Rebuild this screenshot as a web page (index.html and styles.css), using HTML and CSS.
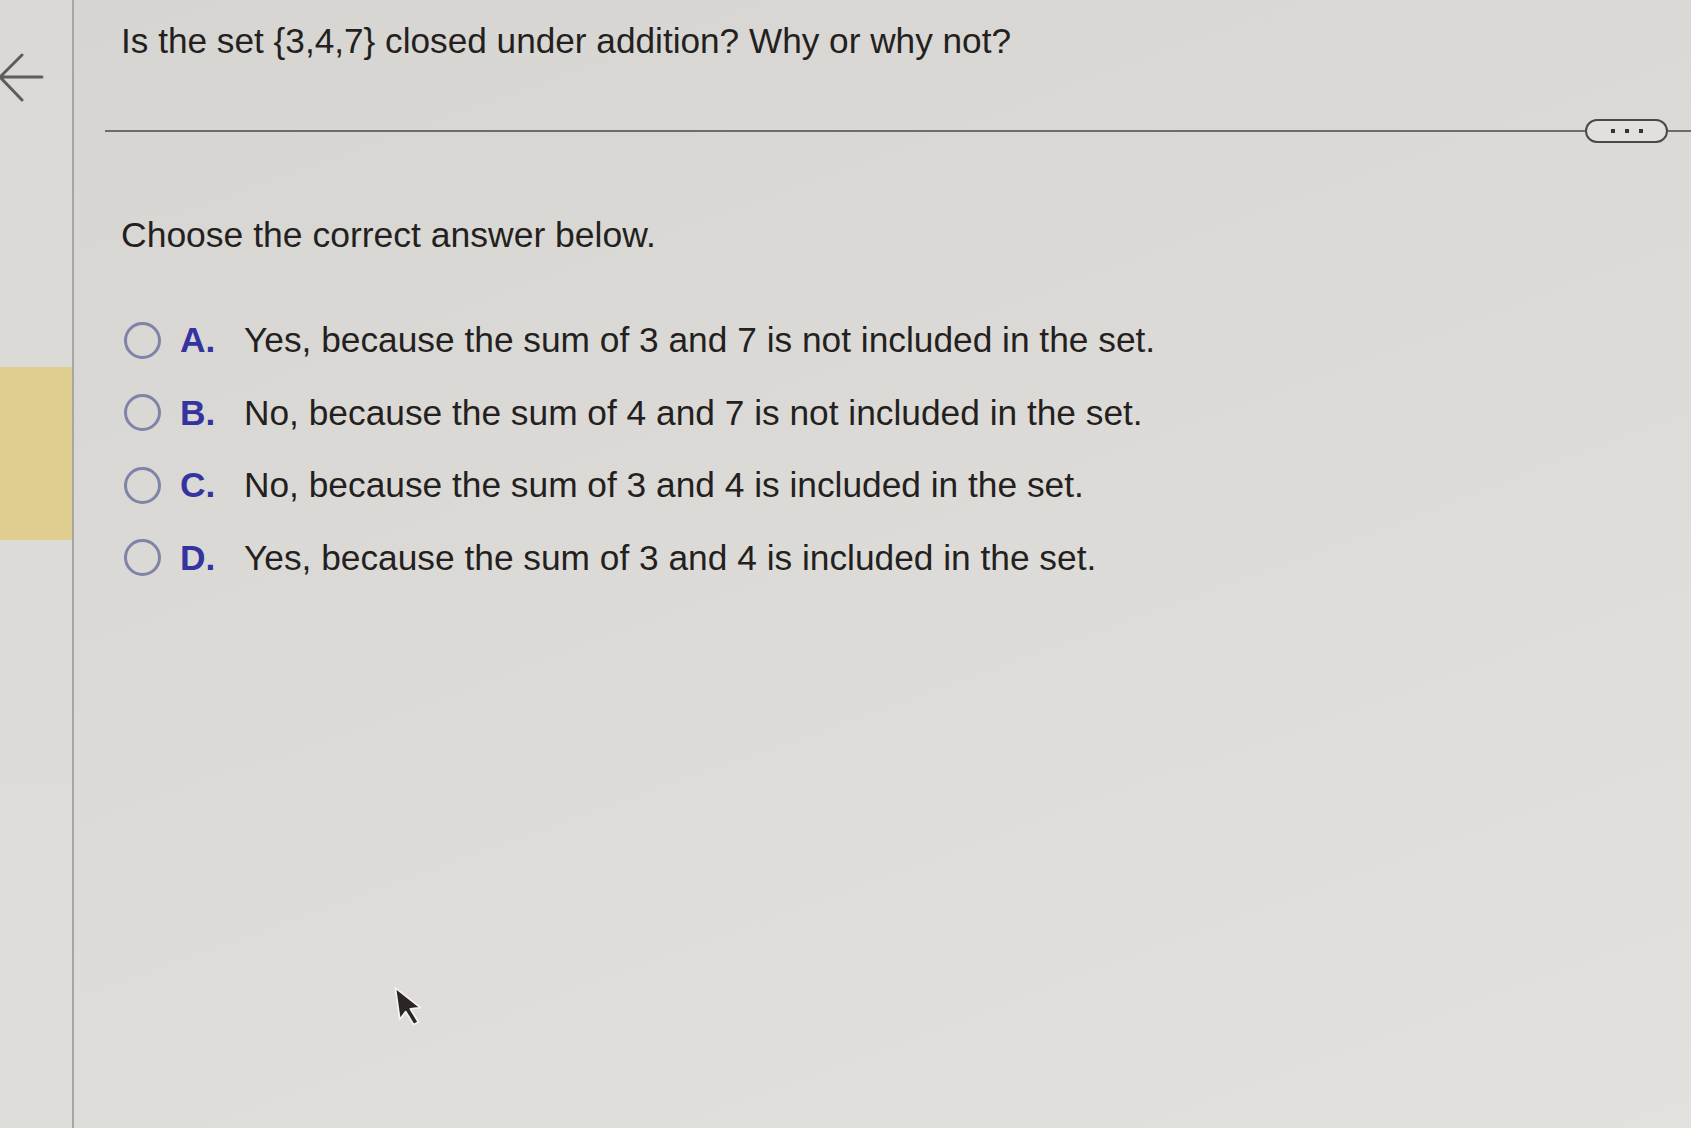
FILE: index.html
```html
<!DOCTYPE html>
<html lang="en">
<head>
<meta charset="utf-8">
<title>Question</title>
<link rel="stylesheet" href="styles.css">
</head>
<body>
<div class="screen">
  <aside class="sidebar">
    <button class="back" aria-label="Back">
      <svg width="46" height="54" viewBox="0 0 46 54"><path d="M44 26 H2 M24 4 L2 26 L24 49" fill="none" stroke="#5f5d5b" stroke-width="3" stroke-linecap="round" stroke-linejoin="round"/></svg>
    </button>
    <div class="marker"></div>
  </aside>
  <main class="content">
    <h1 class="question">Is the set {3,4,7} closed under addition? Why or why not?</h1>
    <div class="divider">
      <span class="rule"></span>
      <button class="more" aria-label="More"><i></i><i></i><i></i></button>
      <span class="rule tail"></span>
    </div>
    <p class="prompt">Choose the correct answer below.</p>
    <ul class="options">
      <li class="option"><span class="radio"></span><span class="letter">A.</span><span class="text">Yes, because the sum of 3 and 7 is not included in the set.</span></li>
      <li class="option"><span class="radio"></span><span class="letter">B.</span><span class="text">No, because the sum of 4 and 7 is not included in the set.</span></li>
      <li class="option"><span class="radio"></span><span class="letter">C.</span><span class="text">No, because the sum of 3 and 4 is included in the set.</span></li>
      <li class="option"><span class="radio"></span><span class="letter">D.</span><span class="text">Yes, because the sum of 3 and 4 is included in the set.</span></li>
    </ul>
  </main>
  <svg class="cursor" width="32" height="46" viewBox="0 0 32 46"><path d="M4 3 L4 35 L11 28 L17 42 L22 40 L16 26 L26 26 Z" fill="#2b2527" stroke="#f4f2ee" stroke-width="1.8" stroke-linejoin="round"/></svg>
</div>
</body>
</html>
```
FILE: styles.css
```css
* { box-sizing: border-box; }
html, body { margin: 0; padding: 0; }
body {
  width: 1691px;
  height: 1128px;
  overflow: hidden;
  font-family: "Liberation Sans", Arial, sans-serif;
  color: #241f20;
}
.screen {
  position: relative;
  display: flex;
  width: 1691px;
  height: 1128px;
  background: linear-gradient(160deg, #d7d5d1 0%, #dcdad6 45%, #e3e1dd 100%);
}
.sidebar {
  flex: 0 0 74px;
  display: flex;
  flex-direction: column;
  border-right: 2px solid #a8a6a3;
  background: linear-gradient(180deg, #dbd9d5 0%, #dfddd9 100%);
}
.back {
  margin: 51px 0 0 -2px;
  padding: 0;
  width: 46px;
  height: 54px;
  border: 0;
  background: none;
  display: block;
}
.marker {
  margin-top: 262px;
  height: 173px;
  width: 72px;
  background: #dfce8f;
}
.content {
  flex: 1;
  padding: 20px 0 0 47px;
  display: flex;
  flex-direction: column;
}
.question {
  margin: 0;
  font-size: 35.2px;
  line-height: 42px;
  font-weight: normal;
}
.divider {
  margin: 57px 0 0 -16px;
  display: flex;
  align-items: center;
  height: 24px;
}
.rule {
  flex: 1;
  height: 2px;
  background: #6e6c6a;
}
.rule.tail { flex: 0 0 23px; }
.more {
  flex: 0 0 83px;
  height: 24px;
  border: 2px solid #4a4848;
  border-radius: 12px;
  background: #e2e0dc;
  padding: 0;
  display: flex;
  justify-content: center;
  align-items: center;
  gap: 10px;
}
.more i {
  width: 4px;
  height: 4px;
  background: #333;
  display: block;
}
.prompt {
  margin: 71px 0 0;
  font-size: 35.5px;
  line-height: 42px;
}
.options {
  list-style: none;
  margin: 63px 0 0;
  padding: 0;
  display: flex;
  flex-direction: column;
  gap: 30.6px;
}
.option {
  display: flex;
  align-items: center;
  height: 42px;
  font-size: 35.3px;
}
.radio {
  margin-left: 3px;
  width: 37px;
  height: 37px;
  border-radius: 50%;
  border: 3px solid #7f83a8;
  flex: 0 0 37px;
}
.letter {
  margin-left: 19px;
  width: 64px;
  font-weight: bold;
  color: #3433a0;
}
.text { white-space: nowrap; }
.cursor {
  position: absolute;
  left: 394px;
  top: 983px;
  transform: rotate(-8deg);
}
```
